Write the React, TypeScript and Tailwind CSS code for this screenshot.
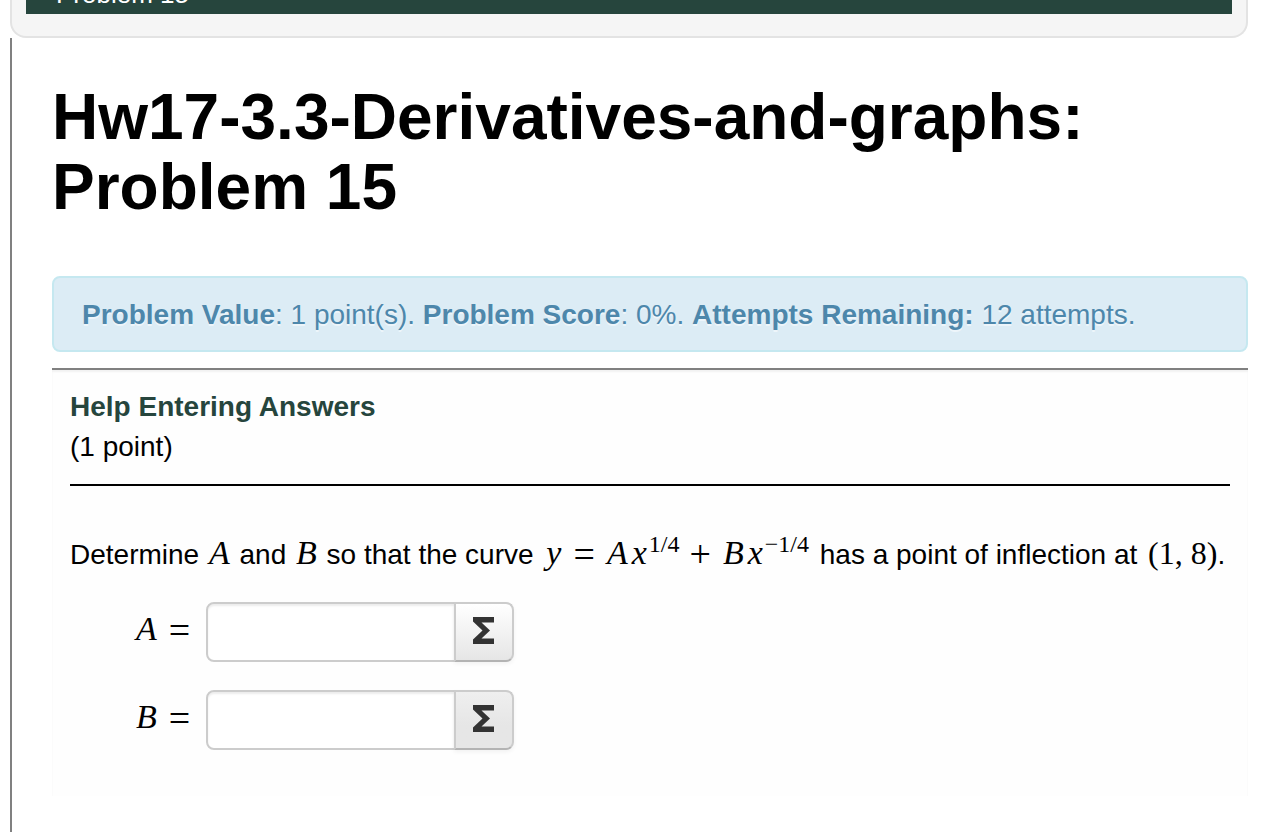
import React from 'react';

const answers = [
  { name: 'A', active: false },
  { name: 'B', active: true }
];

function Variable({ children }: { children: React.ReactNode }) {
  return <i className="px-[2px] font-['Liberation_Serif',serif] text-[34px] leading-[0]">{children}</i>;
}

function Operator({ children }: { children: React.ReactNode }) {
  return (
    <span className="mx-[10px] align-[-3px] font-['Liberation_Serif',serif] text-[38px] leading-[0]">
      {children}
    </span>
  );
}

function Exponent({ children }: { children: React.ReactNode }) {
  return (
    <sup className="static align-[12px] font-['Liberation_Serif',serif] text-[24px] leading-[0]">
      {children}
    </sup>
  );
}

function SigmaIcon() {
  return (
    <svg width="22" height="28" viewBox="0 0 22 28" fill="#333333" aria-hidden="true">
      <path d="M0 0H21V5.5H8.5L17 13.5L8.5 21.5H21V27H0V22.5L9.5 13.5L0 4.5Z" />
    </svg>
  );
}

function AnswerRow({ name, active }: { name: string; active: boolean }) {
  return (
    <div className="flex items-center">
      <label htmlFor={`answer-${name}`} className="mr-[6px] pb-[2px] whitespace-nowrap">
        <Variable>{name}</Variable>
        <Operator>=</Operator>
      </label>
      <input
        id={`answer-${name}`}
        type="text"
        className="h-[60px] w-[250px] rounded-l-lg border-2 border-[#cccccc] bg-white px-3 shadow-[inset_0_2px_2px_rgba(0,0,0,0.075)] outline-none"
      />
      <button
        type="button"
        aria-label={`Open equation editor for ${name}`}
        className={`-ml-[2px] flex h-[60px] w-[60px] items-center justify-center rounded-r-lg border-2 border-[#cccccc] border-b-[#b3b3b3] pb-[2px] shadow-[0_2px_4px_rgba(0,0,0,0.05)] ${
          active ? 'bg-linear-to-b from-[#efefef] to-[#e6e6e6] to-60%' : 'bg-linear-to-b from-white to-[#e6e6e6]'
        }`}
      >
        <SigmaIcon />
      </button>
    </div>
  );
}

export default function App() {
  return (
    <div className="flex min-h-screen flex-col bg-white pr-7 pl-[10px] font-['Liberation_Sans',Arial,sans-serif] text-[28px] leading-[40px] text-black">
      <nav className="rounded-b-2xl border-2 border-t-0 border-[#e3e3e3] bg-[#f5f5f5] px-[14px] pb-[22px]">
        <a
          href="#problem"
          className="flex h-[14px] items-end overflow-hidden bg-[#26453d] px-[30px] text-[26px] text-white"
        >
          Problem 15
        </a>
      </nav>

      <main id="problem" className="flex-1 border-l-2 border-[#808080] pt-11 pb-9 pl-10">
        <h1 className="text-[64px] leading-[70px] font-bold">
          Hw17-3.3-Derivatives-and-graphs: Problem 15
        </h1>

        <div className="mt-[54px] rounded-lg border-2 border-[#c5e8f0] bg-[#dcecf5] px-7 pt-[17px] pb-[15px] text-[#4d87ab] [text-shadow:0_2px_0_rgba(255,255,255,0.5)]">
          <b>Problem Value</b>: 1 point(s). <b>Problem Score</b>: 0%. <b>Attempts Remaining:</b> 12 attempts.
        </div>

        <section className="mt-4 border-t-2 border-[#808080] bg-[#fefefe] px-[18px] pt-[17px] pb-[46px] shadow-[inset_0_2px_2px_rgba(0,0,0,0.05)]">
          <a href="#help" className="font-bold text-[#26453d]">
            Help Entering Answers
          </a>
          <p>(1 point)</p>
          <hr className="mt-[17px] border-t-2 border-black" />

          <p className="mt-[49px] -mr-2">
            Determine <Variable>A</Variable> and <Variable>B</Variable> so that the curve{' '}
            <span className="px-[3px] whitespace-nowrap">
              <Variable>y</Variable>
              <Operator>=</Operator>
              <Variable>A</Variable>
              <Variable>x</Variable>
              <Exponent>1/4</Exponent>
              <Operator>+</Operator>
              <Variable>B</Variable>
              <Variable>x</Variable>
              <Exponent>−1/4</Exponent>
            </span>{' '}
            has a point of inflection at{' '}
            <span className="whitespace-nowrap">
              <span className="pl-[3px] font-['Liberation_Serif',serif] text-[32px] leading-[0]">(1, 8)</span>.
            </span>
          </p>

          <div className="mt-[27px] flex flex-col gap-7 pl-16">
            {answers.map((answer) => (
              <AnswerRow key={answer.name} name={answer.name} active={answer.active} />
            ))}
          </div>
        </section>
      </main>
    </div>
  );
}
